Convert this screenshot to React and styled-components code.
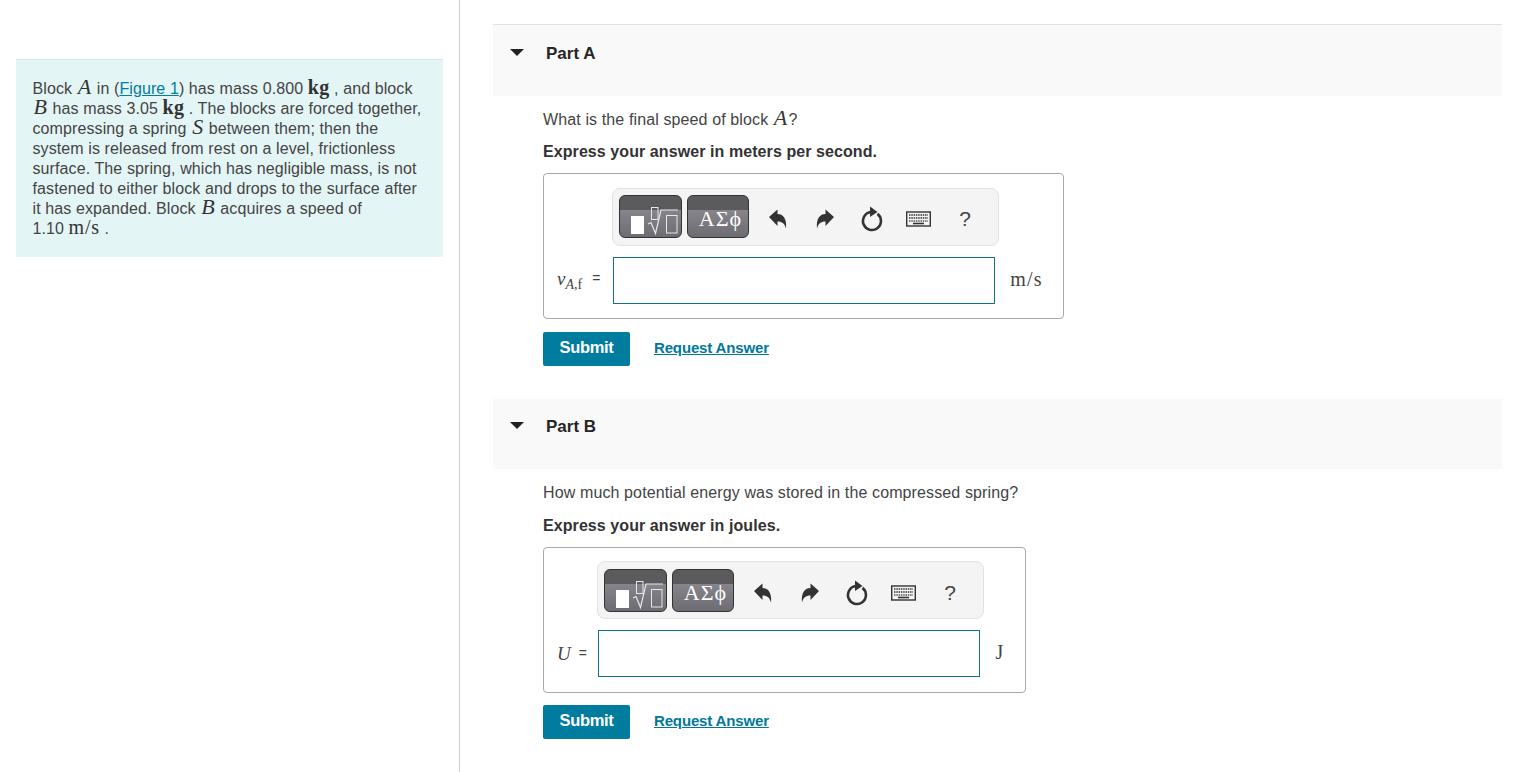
import React from "react";
import styled, { createGlobalStyle } from "styled-components";

const Global = createGlobalStyle`
  html, body { margin: 0; padding: 0; background: #fff; }
  body { font-family: "Liberation Sans", Arial, sans-serif; font-size: 16px; color: #333; overflow: hidden; }
`;
const Page = styled.div`display: flex; height: 772px; width: 1519px;`;
const LeftColumn = styled.aside`
  flex: none; width: 460px; height: 100%; box-sizing: border-box; border-right: 1px solid #ccc; padding: 59px 16px 0;
`;
const Intro = styled.div`
  width: 427px; height: 198px; box-sizing: border-box; background: #e4f5f6; border-top: 1px solid #d9e6e6;
  padding: 19px 0 0 16.5px; line-height: 20px; font-size: 16px; color: #444; letter-spacing: .1px; white-space: nowrap;
`;
const Link = styled.a`color: #007c9f; text-decoration: underline;`;
const MathVar = styled.i`font-family: "Liberation Serif", serif; font-size: 22px; line-height: 0; color: #333; margin: 0 1px;`;
const MathUnit = styled.span`font-family: "Liberation Serif", serif; font-size: 20px; line-height: 0; font-weight: ${p => p.$plain ? 400 : 700}; color: #333; letter-spacing: ${p => p.$plain ? ".8px" : ".3px"};`;
const RightColumn = styled.main`flex: none; width: 1009px; margin-left: 33px; padding-top: 24px;`;
const Part = styled.section`margin-bottom: ${p => p.$gap}px;`;
const PartHeader = styled.header`
  height: ${p => p.$h}px; box-sizing: border-box; background: #f9f9f9; border-top: 1px solid ${p => p.$line ? "#e2e2e2" : "#f9f9f9"};
  display: flex; padding: ${p => p.$top}px 0 0 17px; align-items: flex-start; font-weight: 700; font-size: 17px; line-height: 20px; color: #262626;
`;
const Caret = styled.span`
  width: 0; height: 0; margin: 5px 22px 0 0; border-left: 7.5px solid transparent; border-right: 7.5px solid transparent; border-top: 7.5px solid #222;
`;
const PartBody = styled.div`padding: 14px 0 0 50px;`;
const Question = styled.p`margin: 0; line-height: 20px; color: #444; letter-spacing: .12px;`;
const Instruction = styled.p`margin: ${p => p.$top}px 0 11px; line-height: 20px; font-weight: 700; color: #333; letter-spacing: .08px;`;
const AnswerBox = styled.div`
  width: ${p => p.$w}px; height: 146px; box-sizing: border-box; border: 1px solid #aaa; border-radius: 4px;
  padding-top: ${p => p.$top}px;
`;
const Toolbar = styled.div`
  width: 387px; height: 58px; box-sizing: border-box; margin-left: ${p => p.$left}px;
  background: #f4f4f4; border: 1px solid #e2e2e2; border-radius: 8px; display: flex; align-items: flex-start; padding: ${p => p.$top}px 0 0 6px;
`;
const Template = styled.div`
  width: ${p => p.$w}px; height: 43px; box-sizing: border-box; border: 1px solid #333; border-radius: 6px; margin-right: 5px;
  background: linear-gradient(#5b5b5d 0 34%, #85858b 34%, #6c6c72 100%); color: #fff; display: flex; align-items: flex-end; justify-content: center;
  font-family: "Liberation Serif", serif; font-size: 22px; line-height: 36px; letter-spacing: 1px; padding-left: 5px; flex: none;
`;
const TemplateGlyph = styled.svg`display: block; flex: none; margin-left: -5px;`;
const ToolIcon = styled.span`
  width: ${p => p.$w}px; height: 48px; display: flex; justify-content: center; align-items: center; flex: none; color: #333;
`;
const Help = styled.span`font-size: 21px; line-height: 24px; color: #444;`;
const InputRow = styled.div`display: flex; margin-top: 11px; align-items: center;`;
const Label = styled.div`
  width: ${p => p.$w}px; box-sizing: border-box; padding-left: 13px; font-family: "Liberation Serif", serif; font-size: 19px; color: #444; white-space: nowrap; flex: none;
`;
const Eq = styled.span`font-family: "Liberation Sans", sans-serif; font-size: 14px; vertical-align: 2px; margin-left: ${p => p.$gap}px;`;
const Sub = styled.span`font-size: 14px; vertical-align: -4px;`;
const AnswerInput = styled.input`
  width: 382px; height: 47px; box-sizing: border-box; border: 1px solid #14718c; background: #fff; outline: none; padding: 0; flex: none;
`;
const Units = styled.div`flex: 1; text-align: center; font-family: "Liberation Serif", serif; font-size: 20px; letter-spacing: 1.2px; color: #444; padding: 0 5px 2px 0;`;
const Actions = styled.div`display: flex; align-items: center; margin-top: ${p => p.$top}px;`;
const Submit = styled.button`
  width: 87px; height: 34px; border: 0; border-radius: 2px; background: #007c9f; color: #fff; font: 700 16.5px "Liberation Sans", sans-serif; letter-spacing: -.3px; padding: 0 0 4px; margin-right: 24px;
`;
const RequestLink = styled.a`color: #00789b; font-weight: 700; font-size: 15px; text-decoration: underline; letter-spacing: -.15px; margin-top: -3px;`;

const TemplateIcon = () => (
  <TemplateGlyph width="61" height="41" viewBox="0 0 61 41">
    <rect x="11" y="20" width="13" height="18" fill="#fff" />
    <path d="M28 28l3-1.500 4.500 11L41 14h17" fill="none" stroke="#e8e8e8" strokeWidth="1.200" />
    <rect x="31.500" y="11.500" width="6.500" height="12" fill="none" stroke="#e8e8e8" strokeWidth="1" />
    <rect x="46.500" y="19.500" width="10.500" height="17.500" fill="none" stroke="#e8e8e8" strokeWidth="1" />
  </TemplateGlyph>
);
const Undo = () => (
  <svg width="18" height="20" viewBox="0 0 18 20">
    <path d="M0 8L8.500 .5v4.500c5.500 0 9.500 4.500 8.500 14.500-1.500-5-3.500-7-8.500-7v4.500z" fill="#333" />
  </svg>
);
const Redo = () => (
  <svg width="18" height="20" viewBox="0 0 18 20">
    <path d="M18 8L9.500 .5V5C4 5 0 9.500 1 19.500c1.500-5 3.500-7 8.500-7V17z" fill="#333" />
  </svg>
);
const Reset = () => (
  <svg width="24" height="26" viewBox="0 0 24 26">
    <path d="M17.500 7.900A9 9 0 1 1 11 6.050" fill="none" stroke="#333" strokeWidth="2.600" />
    <path d="M10 .5l7.500 5.500L10 11z" fill="#333" />
  </svg>
);
const Keyboard = () => (
  <svg width="25" height="16" viewBox="0 0 25 16">
    <rect x=".7" y="1" width="23.600" height="14" fill="#f4f4f4" stroke="#333" strokeWidth="1.400" />
    <path d="M3 4h19M3 7h19" stroke="#333" strokeWidth="1.500" strokeDasharray="1.500 .8" />
    <path d="M3 10h19" stroke="#555" strokeWidth="1.400" strokeDasharray="1.500 .8" />
    <path d="M7 12.500h11" stroke="#333" strokeWidth="1.600" />
  </svg>
);

const Tools = ({ left, top }) => (
  <Toolbar $left={left} $top={top}>
    <Template $w={63}><TemplateIcon /></Template>
    <Template $w={62}>ΑΣϕ</Template>
    <ToolIcon $w={48}><Undo /></ToolIcon>
    <ToolIcon $w={46}><Redo /></ToolIcon>
    <ToolIcon $w={47}><Reset /></ToolIcon>
    <ToolIcon $w={47}><Keyboard /></ToolIcon>
    <ToolIcon $w={46}><Help>?</Help></ToolIcon>
  </Toolbar>
);

export default function App() {
  return (
    <Page>
      <Global />
      <LeftColumn>
        <Intro>
          Block <MathVar>A</MathVar> in (<Link>Figure 1</Link>) has mass 0.800 <MathUnit>kg</MathUnit> , and block<br />
          <MathVar>B</MathVar> has mass 3.05 <MathUnit>kg</MathUnit> . The blocks are forced together,<br />
          compressing a spring <MathVar>S</MathVar> between them; then the<br />
          system is released from rest on a level, frictionless<br />
          surface. The spring, which has negligible mass, is not<br />
          fastened to either block and drops to the surface after<br />
          it has expanded. Block <MathVar>B</MathVar> acquires a speed of<br />
          1.10 <MathUnit $plain>m/s</MathUnit> .
        </Intro>
      </LeftColumn>
      <RightColumn>
        <Part $gap={33}>
          <PartHeader $h={72} $top={19} $line><Caret />Part A</PartHeader>
          <PartBody>
            <Question>What is the final speed of block <MathVar>A</MathVar>?</Question>
            <Instruction $top={12}>Express your answer in meters per second.</Instruction>
            <AnswerBox $w={521} $top={14}>
              <Tools left={68} top={6} />
              <InputRow>
                <Label $w={69}><i>v</i><Sub><i>A</i>,f</Sub><Eq $gap={10}>=</Eq></Label>
                <AnswerInput aria-label="v A,f" />
                <Units>m/s</Units>
              </InputRow>
            </AnswerBox>
            <Actions $top={13}><Submit>Submit</Submit><RequestLink href="#">Request Answer</RequestLink></Actions>
          </PartBody>
        </Part>
        <Part $gap={0}>
          <PartHeader $h={70} $top={17}><Caret />Part B</PartHeader>
          <PartBody>
            <Question>How much potential energy was stored in the compressed spring?</Question>
            <Instruction $top={13}>Express your answer in joules.</Instruction>
            <AnswerBox $w={483} $top={13}>
              <Tools left={53} top={7} />
              <InputRow>
                <Label $w={54}><i>U</i><Eq $gap={8}>=</Eq></Label>
                <AnswerInput aria-label="U" />
                <Units>J</Units>
              </InputRow>
            </AnswerBox>
            <Actions $top={12}><Submit>Submit</Submit><RequestLink href="#">Request Answer</RequestLink></Actions>
          </PartBody>
        </Part>
      </RightColumn>
    </Page>
  );
}
